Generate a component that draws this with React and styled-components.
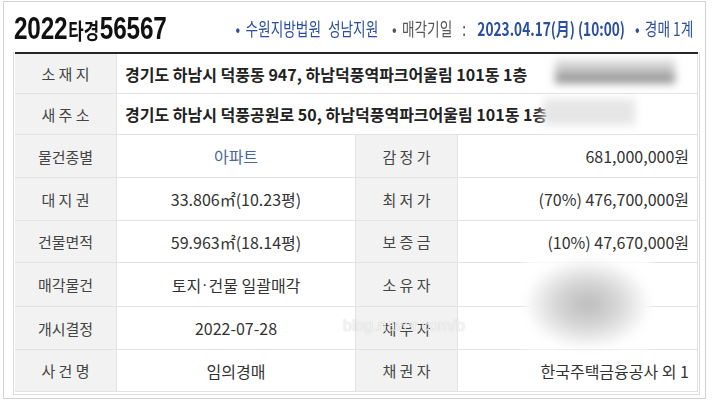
import React from 'react';
import styled, { createGlobalStyle } from 'styled-components';

const GlobalStyle = createGlobalStyle`
  body {
    margin: 0;
    background: #fff;
    font-family: "Noto Sans CJK KR", "Noto Sans", sans-serif;
  }
`;

const rows = [
  { label: '물건종별', value: '아파트', link: true, label2: '감 정 가', value2: '681,000,000원' },
  { label: '대 지 권', value: '33.806㎡(10.23평)', label2: '최 저 가', value2: '(70%) 476,700,000원' },
  { label: '건물면적', value: '59.963㎡(18.14평)', label2: '보 증 금', value2: '(10%) 47,670,000원' },
  {
    label: '매각물건',
    value: (
      <>
        토지<StDot>·</StDot>건물 일괄매각
      </>
    ),
    label2: '소 유 자',
    value2: ''
  },
  { label: '개시결정', value: '2022-07-28', label2: '채 무 자', value2: '' },
  { label: '사 건 명', value: '임의경매', label2: '채 권 자', value2: '한국주택금융공사 외 1' }
];

function StDot({ children }) {
  return <Dot>{children}</Dot>;
}

const App = () => {
  return (
    <>
      <GlobalStyle />
      <StFrame>
        <StHeader>
          <StTitle>
            <StNum>2022</StNum>
            <StKind>타경</StKind>
            <StNum>56567</StNum>
          </StTitle>
          <StInfoWrap>
            <StInfo>
              <StItem $wide>
                <StBullet>•</StBullet>수원지방법원 성남지원
              </StItem>
              <StItem $gap={18}>
                <StGray>
                  <StBullet>•</StBullet>매각기일<StColon>:</StColon>
                </StGray>
                <StDate>2023.04.17(月) (10:00)</StDate>
              </StItem>
              <StItem $gap={13}>
                <StBullet>•</StBullet>경매 1계
              </StItem>
            </StInfo>
          </StInfoWrap>
        </StHeader>

        <StBox>
          <StTable>
            <StLabel>소 재 지</StLabel>
            <StValue $span={3} $align="left" $strong>
              경기도 하남시 덕풍동 947, 하남덕풍역파크어울림 101동 1층
              <StBlur $left={438} $top={5} $width={120} $height={24} $tone="dark" />
            </StValue>
            <StLabel>새 주 소</StLabel>
            <StValue $span={3} $align="left" $strong>
              경기도 하남시 덕풍공원로 50, 하남덕풍역파크어울림 101동 1층
              <StBlur $left={426} $top={5} $width={92} $height={26} $tone="light" />
            </StValue>

            {rows.map((row) => (
              <React.Fragment key={row.label}>
                <StLabel>{row.label}</StLabel>
                <StValue $align="center" $link={row.link}>
                  {row.value}
                </StValue>
                <StLabel>{row.label2}</StLabel>
                <StValue $align="right">{row.value2}</StValue>
              </React.Fragment>
            ))}

            <StOwnerBlur />
            <StWatermark>blog.naver.com/b</StWatermark>
          </StTable>
        </StBox>
      </StFrame>
    </>
  );
};

export default App;

const Dot = styled.span`
  font-family: "Liberation Sans", Arial, sans-serif;
  margin: 0 1px;
`;

const StFrame = styled.div`
  box-sizing: border-box;
  width: 703px;
  height: 398px;
  margin: 1px 0 0 3px;
  border: 1px solid #d2d2d2;
  padding: 0 5px 0 9px;
`;

const StHeader = styled.div`
  height: 50px;
  display: flex;
  align-items: center;
  padding: 0 7px 0 1px;
`;

const StTitle = styled.div`
  flex-shrink: 0;
  display: flex;
  align-items: baseline;
  white-space: nowrap;
  transform: scaleX(0.76);
  transform-origin: left center;
  color: #111;
  margin-top: 2px;
`;

const StNum = styled.span`
  font-family: "Liberation Sans", Arial, sans-serif;
  font-weight: 700;
  font-size: 32px;
  letter-spacing: -0.2px;
`;

const StKind = styled.span`
  font-family: "Noto Sans CJK KR", sans-serif;
  font-weight: 700;
  font-size: 22px;
  margin: 0 1px;
`;

const StInfoWrap = styled.div`
  flex: 1;
  min-width: 0;
  display: flex;
  justify-content: flex-end;
`;

const StInfo = styled.div`
  flex-shrink: 0;
  display: flex;
  align-items: center;
  transform: scaleX(0.76);
  transform-origin: right center;
  font-size: 18px;
  color: #2b4f9c;
  white-space: nowrap;
  margin-top: 2px;
`;

const StItem = styled.span`
  margin-left: ${(p) => p.$gap || 0}px;
  word-spacing: ${(p) => (p.$wide ? '5px' : 'normal')};
`;

const StBullet = styled.span`
  margin-right: 7px;
`;

const StGray = styled.span`
  color: #555;
`;

const StColon = styled.span`
  margin: 0 15px 0 13px;
`;

const StDate = styled.span`
  font-weight: 700;
`;

const StBox = styled.div`
  border: 1px solid #dcdcdc;
  border-top: none;
  padding: 0 1px 2px 1px;
`;

const StTable = styled.div`
  position: relative;
  display: grid;
  grid-template-columns: 102px 239px 102px 1fr;
  grid-template-rows: 40px 41px 43px 43px 42px 44px 43px 42px;
  border-top: 2px solid #262626;
  overflow: hidden;
`;

const StLabel = styled.div`
  box-sizing: border-box;
  display: flex;
  align-items: center;
  justify-content: center;
  background: #f2f2f2;
  border-right: 1px solid #e2e2e2;
  border-bottom: 1px solid #e2e2e2;
  font-size: 15px;
  color: #444;
  white-space: pre;
`;

const StValue = styled.div`
  box-sizing: border-box;
  position: relative;
  grid-column: span ${(p) => p.$span || 1};
  display: flex;
  align-items: center;
  justify-content: ${(p) =>
    p.$align === 'left' ? 'flex-start' : p.$align === 'right' ? 'flex-end' : 'center'};
  padding: 0 ${(p) => (p.$align === 'right' ? '8px' : '0')} 0 ${(p) => (p.$align === 'left' ? '8px' : '0')};
  background: #fff;
  border-right: 1px solid #e2e2e2;
  border-bottom: 1px solid #e2e2e2;
  font-size: 16px;
  font-weight: ${(p) => (p.$strong ? 700 : 400)};
  color: ${(p) => (p.$link ? '#4a6896' : p.$strong ? '#222' : '#333')};
  white-space: nowrap;
`;

const StBlur = styled.span`
  position: absolute;
  left: ${(p) => p.$left}px;
  top: ${(p) => p.$top}px;
  width: ${(p) => p.$width}px;
  height: ${(p) => p.$height}px;
  background: ${(p) =>
    p.$tone === 'dark'
      ? 'linear-gradient(to bottom, #e8e8e8 0%, #bdbdbd 55%, #7a7a7a 100%)'
      : '#e6e6e6'};
  filter: blur(4px);
`;

const StOwnerBlur = styled.div`
  position: absolute;
  left: 510px;
  top: 205px;
  width: 125px;
  height: 90px;
  background: radial-gradient(ellipse at center, #bcbcbc 0%, #d6d6d6 35%, #fff 72%);
  filter: blur(5px);
`;

const StWatermark = styled.div`
  position: absolute;
  left: 328px;
  top: 263px;
  font-family: "Liberation Sans", Arial, sans-serif;
  font-size: 16px;
  color: rgba(255, 255, 255, 0.85);
  text-shadow: 0 0 1px rgba(0, 0, 0, 0.25);
  white-space: nowrap;
`;
